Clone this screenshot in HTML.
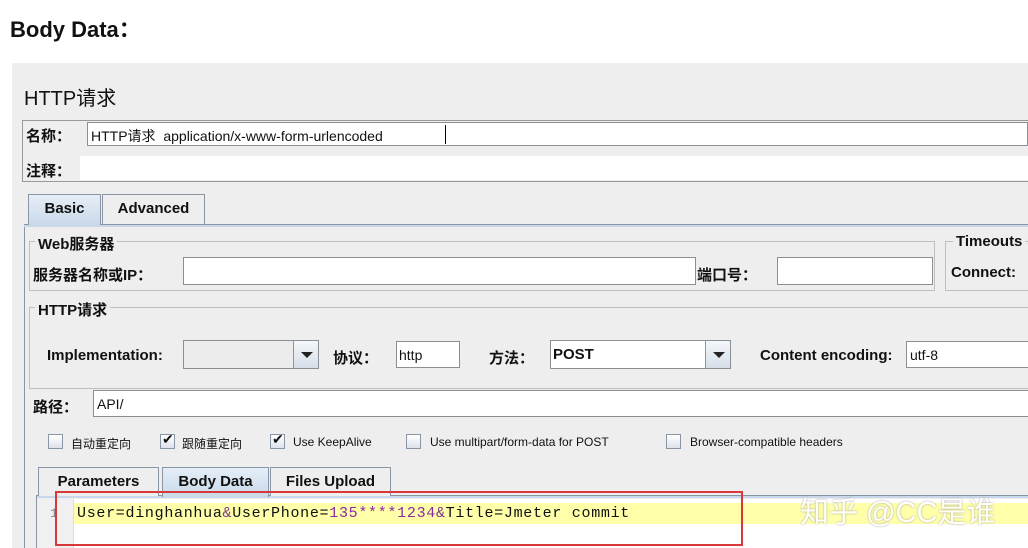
<!DOCTYPE html>
<html><head><meta charset="utf-8"><style>
*{margin:0;padding:0;box-sizing:border-box}
body{width:1028px;height:548px;background:#fff;position:relative;overflow:hidden;font-family:"Liberation Sans","Noto Sans CJK SC",sans-serif;color:#111}
.a{position:absolute;white-space:nowrap}
.in{position:absolute;background:#fff;border:1px solid #8a8f96}
.b{font-weight:bold;font-size:15px}
.n{font-size:14px}
.grp{position:absolute;border:1px solid #bfbfbf}
.cb{position:absolute;width:15px;height:15px;border:1px solid #8a96a6;background:linear-gradient(#fff,#dde3ea)}
.tab{position:absolute;border:1px solid #8a96a6;border-bottom:none;background:#eee;font-weight:bold;font-size:15px;text-align:center}
.combo{position:absolute;width:25px;background:linear-gradient(#f4f7fa,#d6dee8);border-left:1px solid #8a96a6;top:0;bottom:0;right:0}
.combo:after{content:"";position:absolute;left:7px;top:11px;border-left:6px solid transparent;border-right:6px solid transparent;border-top:6px solid #222}
</style></head><body>
<div class="a" style="left:10px;top:12px;font-size:22px;font-weight:bold">Body Data：</div>
<div class="a" style="left:12px;top:63px;right:0;bottom:0;background:#eeeeee"></div>
<div class="a" style="left:24px;top:82px;font-size:20px">HTTP请求</div>
<div class="grp" style="left:22px;top:120px;right:-2px;height:62px;border-color:#999"></div>
<div class="a b" style="left:26px;top:125px">名称：</div>
<div class="in" style="left:87px;top:122px;right:0;height:24px"></div>
<div class="a n" style="left:91px;top:126px">HTTP请求&nbsp; application/x-www-form-urlencoded</div>
<div class="a" style="left:445px;top:125px;width:1px;height:19px;background:#000"></div>
<div class="a b" style="left:26px;top:160px">注释：</div>
<div class="a" style="left:80px;top:156px;right:0;height:24px;background:#fff"></div>
<div class="a" style="left:24px;top:224px;width:1px;bottom:0;background:#8a96a6"></div>
<div class="a" style="left:24px;top:224px;right:0;height:3px;background:#c8d8ea;border-top:1px solid #8a96a6"></div>
<div class="tab" style="left:28px;top:194px;width:73px;height:31px;line-height:28px;background:linear-gradient(#e6eef7,#c9d9ea)">Basic</div>
<div class="tab" style="left:102px;top:194px;width:103px;height:30px;line-height:28px">Advanced</div>
<div class="grp" style="left:29px;top:241px;width:906px;height:50px"></div>
<div class="a b" style="left:35px;top:233px;background:#eee;padding:0 3px">Web服务器</div>
<div class="a b" style="left:33px;top:264px">服务器名称或IP：</div>
<div class="in" style="left:183px;top:257px;width:513px;height:28px"></div>
<div class="a b" style="left:697px;top:264px">端口号：</div>
<div class="in" style="left:777px;top:257px;width:156px;height:28px"></div>
<div class="grp" style="left:945px;top:241px;width:100px;height:50px"></div>
<div class="a b" style="left:953px;top:233px;background:#eee;padding:0 3px">Timeouts</div>
<div class="a b" style="left:951px;top:264px">Connect:</div>
<div class="grp" style="left:29px;top:307px;right:-2px;height:82px"></div>
<div class="a b" style="left:35px;top:299px;background:#eee;padding:0 3px">HTTP请求</div>
<div class="a b" style="left:47px;top:347px">Implementation:</div>
<div class="in" style="left:183px;top:340px;width:136px;height:29px;background:#ececec"><div class="combo"></div></div>
<div class="a b" style="left:333px;top:347px">协议：</div>
<div class="in" style="left:396px;top:341px;width:64px;height:27px"></div>
<div class="a n" style="left:399px;top:347px">http</div>
<div class="a b" style="left:489px;top:347px">方法：</div>
<div class="in" style="left:550px;top:340px;width:181px;height:29px"><div class="combo"></div></div>
<div class="a b" style="left:553px;top:346px">POST</div>
<div class="a b" style="left:760px;top:347px">Content encoding:</div>
<div class="in" style="left:906px;top:341px;right:-2px;height:27px"></div>
<div class="a n" style="left:910px;top:347px">utf-8</div>
<div class="a b" style="left:33px;top:396px">路径：</div>
<div class="in" style="left:93px;top:390px;right:-2px;height:27px"></div>
<div class="a n" style="left:97px;top:396px">API/</div>
<div class="cb" style="left:48px;top:434px"></div><div class="a" style="left:71px;top:435px;font-size:12px">自动重定向</div>
<div class="cb" style="left:160px;top:434px"></div><div class="a" style="left:162px;top:431px;font-size:14px">✔</div><div class="a" style="left:182px;top:435px;font-size:12px">跟随重定向</div>
<div class="cb" style="left:270px;top:434px"></div><div class="a" style="left:272px;top:431px;font-size:14px">✔</div><div class="a" style="left:293px;top:435px;font-size:12px">Use KeepAlive</div>
<div class="cb" style="left:406px;top:434px"></div><div class="a" style="left:430px;top:435px;font-size:12px">Use multipart/form-data for POST</div>
<div class="cb" style="left:666px;top:434px"></div><div class="a" style="left:690px;top:435px;font-size:12px">Browser-compatible headers</div>
<div class="a" style="left:36px;top:495px;right:0;height:3px;background:#c8d8ea;border-top:1px solid #8a96a6"></div>
<div class="a" style="left:36px;top:495px;width:1px;bottom:0;background:#8a96a6"></div>
<div class="tab" style="left:38px;top:467px;width:121px;height:29px;line-height:28px">Parameters</div>
<div class="tab" style="left:162px;top:467px;width:107px;height:30px;line-height:28px;background:linear-gradient(#e6eef7,#c9d9ea)">Body Data</div>
<div class="tab" style="left:270px;top:467px;width:121px;height:29px;line-height:28px">Files Upload</div>
<div class="a" style="left:38px;top:499px;right:0;bottom:0;background:#fff"></div>
<div class="a" style="left:38px;top:499px;width:36px;bottom:0;background:#f0f0f0;border-right:1px solid #ddd"></div>
<div class="a" style="left:74px;top:503px;right:0;height:21px;background:#ffffaa"></div>
<div class="a" style="left:50px;top:506px;font-family:'Liberation Mono',monospace;font-size:13px;color:#888">1</div>
<div class="a" style="left:77px;top:505px;font-family:'Liberation Mono',monospace;font-size:15px;letter-spacing:0.7px;color:#111">User=dinghanhua<span style="color:#7a3a8a">&amp;</span>UserPhone=<span style="color:#8a2aa0">135****1234</span><span style="color:#7a3a8a">&amp;</span>Title=Jmeter commit</div>
<div class="a" style="left:55px;top:491px;width:688px;height:55px;border:2px solid #d9383a"></div>
<div class="a" style="left:800px;top:489px;font-size:29px;color:#fff;text-shadow:0 0 2px #999;opacity:.9">知乎 @CC是谁</div>
</body></html>
